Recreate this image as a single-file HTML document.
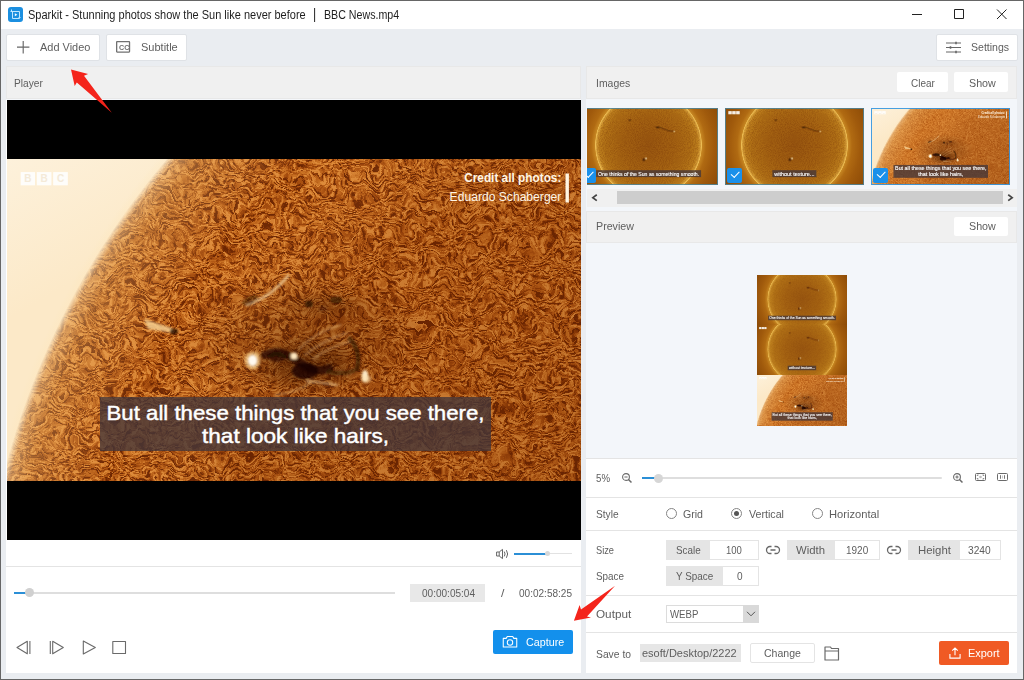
<!DOCTYPE html>
<html><head><meta charset="utf-8"><title>Sparkit</title>
<style>
*{box-sizing:border-box;margin:0;padding:0}
html,body{width:1024px;height:680px;overflow:hidden}
body{position:relative;background:#eaedf1;font-family:"Liberation Sans",sans-serif;font-size:11px;color:#5e5e5e}
.a{position:absolute}
.t{position:absolute;white-space:nowrap;line-height:14px;height:14px;transform-origin:0 50%}
.btn{position:absolute;background:#fff;border:1px solid #dfe2e6;border-radius:2px}
.panel{position:absolute;background:#fff}
.hdr{position:absolute;background:#f0f0f0;border:1px solid #e8e8e8}
.lbl{position:absolute;background:#e5e5e5;height:20px}
.inp{position:absolute;background:#fff;border:1px solid #e4e4e4;border-left:none;height:20px}
.hl{position:absolute;height:1px;background:#e4e4e4}
svg{position:absolute;overflow:visible}
.th{position:absolute;top:0;width:139px;height:77px;overflow:hidden}
.thb{position:absolute;left:0;top:0;width:139px;height:77px;border:1px solid rgba(70,135,165,.8)}
.ck{position:absolute;left:2px;top:60px;width:15px;height:15px;border-radius:2px;background:#1a90ea}
.ck:after{content:"";position:absolute;left:3.5px;top:3.2px;width:7px;height:3.5px;border-left:1.5px solid #fff;border-bottom:1.5px solid #fff;transform:rotate(-47deg)}
.rad{width:11px;height:11px;border-radius:6px;border:1px solid #858585;background:#fff}
.rad i{position:absolute;left:2px;top:2px;width:5px;height:5px;border-radius:3px;background:#555}
.lk{fill:none;stroke:#686868;stroke-width:1.3}
</style></head><body>
<svg width="0" height="0" style="left:0;top:0">
<defs>
<radialGradient id="sunmask" gradientUnits="userSpaceOnUse" cx="760.5" cy="511" r="800">
<stop offset="0" stop-color="#b4691c"/>
<stop offset="0.976" stop-color="#b4691c"/>
<stop offset="0.986" stop-color="#b4691c" stop-opacity="0"/>
</radialGradient>
<radialGradient id="shade" gradientUnits="userSpaceOnUse" cx="760.5" cy="511" r="800">
<stop offset="0" stop-color="#5a2000" stop-opacity="0.3"/>
<stop offset="0.7" stop-color="#5a2000" stop-opacity="0.13"/>
<stop offset="0.86" stop-color="#ffd890" stop-opacity="0"/>
<stop offset="0.92" stop-color="#ffd890" stop-opacity="0.16"/>
<stop offset="0.955" stop-color="#ffd890" stop-opacity="0.28"/>
<stop offset="0.975" stop-color="#ffe0a8" stop-opacity="0.48"/>
<stop offset="0.985" stop-color="#ffe6b8" stop-opacity="0.3"/>
<stop offset="0.995" stop-color="#ffe6b8" stop-opacity="0"/>
</radialGradient>
<linearGradient id="sky" x1="0" y1="0" x2="1" y2="1">
<stop offset="0" stop-color="#fdf1db"/>
<stop offset="0.25" stop-color="#fce9c8"/>
</linearGradient>
<radialGradient id="bg12" gradientUnits="userSpaceOnUse" cx="287.5" cy="155" r="340">
<stop offset="0" stop-color="#b87414"/>
<stop offset="0.652" stop-color="#c68622"/>
<stop offset="0.7" stop-color="#b06a12"/>
<stop offset="0.8" stop-color="#a05a0c"/>
<stop offset="1" stop-color="#884806"/>
</radialGradient>
<radialGradient id="disk12" gradientUnits="userSpaceOnUse" cx="287.5" cy="155" r="222">
<stop offset="0" stop-color="#985610"/>
<stop offset="0.5" stop-color="#a46212"/>
<stop offset="0.8" stop-color="#b07016"/>
<stop offset="0.92" stop-color="#be801e"/>
<stop offset="0.965" stop-color="#d8a038"/>
<stop offset="0.988" stop-color="#ecbc54"/>
<stop offset="1" stop-color="#ecbc54" stop-opacity="0"/>
</radialGradient>
<filter id="tex" x="-40" y="-40" width="655" height="402" filterUnits="userSpaceOnUse" color-interpolation-filters="sRGB">
<feTurbulence type="fractalNoise" baseFrequency="0.036" numOctaves="3" seed="5" result="d"/>
<feTurbulence type="fractalNoise" baseFrequency="0.17 0.4" numOctaves="3" seed="7" result="n0"/>
<feDisplacementMap in="n0" in2="d" scale="36" xChannelSelector="R" yChannelSelector="G" result="n1"/>
<feGaussianBlur in="n1" stdDeviation="0.7" result="n"/>
<feColorMatrix in="n" type="matrix" values="1 0 0 0 0  1 0 0 0 0  1 0 0 0 0  0 0 0 0 1" result="g1"/>
<feTurbulence type="fractalNoise" baseFrequency="0.08 0.09" numOctaves="2" seed="11" result="lo"/>
<feColorMatrix in="lo" type="matrix" values="1 0 0 0 0  1 0 0 0 0  1 0 0 0 0  0 0 0 0 1" result="g2"/>
<feComposite in="g1" in2="g2" operator="arithmetic" k1="0" k2="0.8" k3="0.2" k4="0" result="gm"/>
<feColorMatrix in="gm" type="matrix" values="3.3 0 0 0 -1.15  3.3 0 0 0 -1.15  3.3 0 0 0 -1.15  0 0 0 0 1" result="g"/>
<feComponentTransfer in="g" result="c">
<feFuncR type="table" tableValues="0.43 0.585 0.705 0.79 0.87"/>
<feFuncG type="table" tableValues="0.15 0.25 0.35 0.445 0.545"/>
<feFuncB type="table" tableValues="0.01 0.035 0.08 0.14 0.225"/>
</feComponentTransfer>
<feComposite in="c" in2="SourceGraphic" operator="in"/>
</filter>
<filter id="texs" x="-40" y="-40" width="655" height="402" filterUnits="userSpaceOnUse" color-interpolation-filters="sRGB">
<feTurbulence type="fractalNoise" baseFrequency="0.036" numOctaves="3" seed="5" result="d"/>
<feTurbulence type="fractalNoise" baseFrequency="0.17 0.4" numOctaves="3" seed="7" result="n0"/>
<feDisplacementMap in="n0" in2="d" scale="36" xChannelSelector="R" yChannelSelector="G" result="n1"/>
<feGaussianBlur in="n1" stdDeviation="0.85" result="n"/>
<feColorMatrix in="n" type="matrix" values="1 0 0 0 0  1 0 0 0 0  1 0 0 0 0  0 0 0 0 1" result="g1"/>
<feTurbulence type="fractalNoise" baseFrequency="0.08 0.09" numOctaves="2" seed="11" result="lo"/>
<feColorMatrix in="lo" type="matrix" values="1 0 0 0 0  1 0 0 0 0  1 0 0 0 0  0 0 0 0 1" result="g2"/>
<feComposite in="g1" in2="g2" operator="arithmetic" k1="0" k2="0.8" k3="0.2" k4="0" result="gm"/>
<feColorMatrix in="gm" type="matrix" values="1.0 0 0 0 0.27  1.0 0 0 0 0.27  1.0 0 0 0 0.27  0 0 0 0 1" result="g"/>
<feComponentTransfer in="g" result="c">
<feFuncR type="table" tableValues="0.43 0.585 0.705 0.79 0.87"/>
<feFuncG type="table" tableValues="0.15 0.25 0.35 0.445 0.545"/>
<feFuncB type="table" tableValues="0.01 0.035 0.08 0.14 0.225"/>
</feComponentTransfer>
<feComposite in="c" in2="SourceGraphic" operator="in"/>
</filter>
<filter id="grain" x="0" y="0" width="575" height="322" filterUnits="userSpaceOnUse" color-interpolation-filters="sRGB">
<feTurbulence type="fractalNoise" baseFrequency="0.25" numOctaves="2" seed="3" result="n"/>
<feColorMatrix in="n" type="matrix" values="0 0 0 0 0.38  0 0 0 0 0.12  0 0 0 0 0  0.9 0 0 0 -0.3" result="g"/>
<feComposite in="g" in2="SourceGraphic" operator="in"/>
</filter>
<filter id="b1" x="-50%" y="-50%" width="200%" height="200%"><feGaussianBlur stdDeviation="1.2"/></filter>
<radialGradient id="dk"><stop offset="0" stop-color="#3a1600" stop-opacity="0.5"/><stop offset="0.5" stop-color="#3a1600" stop-opacity="0.3"/><stop offset="1" stop-color="#3a1600" stop-opacity="0"/></radialGradient>
<filter id="b3" x="-50%" y="-50%" width="200%" height="200%"><feGaussianBlur stdDeviation="3.5"/></filter>
</defs>
</svg>
<!-- window frame -->
<div class="a" style="left:0;top:0;width:1024px;height:680px;border:1px solid #666;z-index:50"></div>
<!-- title bar -->
<div class="a" style="left:1px;top:1px;width:1022px;height:28px;background:#fff"></div>
<div class="t" style="transform:scaleX(0.9169);left:28px;top:7.5px;color:#1e1e1e;font-size:12px">Sparkit - Stunning photos show the Sun like never before</div>
<div class="t" style="transform:scaleX(0.8790);left:312.7px;top:6.3px;color:#1e1e1e;font-size:14px;line-height:16px;height:16px">|</div>
<div class="t" style="transform:scaleX(0.8878);left:323.5px;top:7.5px;color:#1e1e1e;font-size:12px">BBC News.mp4</div>

<!-- toolbar buttons -->
<div class="btn" style="left:6px;top:34px;width:93.5px;height:26.5px"></div>
<div class="t" style="transform:scaleX(0.9965);left:40.4px;top:40px">Add Video</div>
<div class="btn" style="left:106px;top:34px;width:80.5px;height:26.5px"></div>
<div class="t" style="transform:scaleX(0.9999);left:140.6px;top:40px">Subtitle</div>
<div class="btn" style="left:936px;top:34px;width:82px;height:26.5px"></div>
<div class="t" style="transform:scaleX(0.9585);left:970.5px;top:40px">Settings</div>

<!-- left panel -->
<div class="panel" style="left:6px;top:66px;width:575px;height:607px"></div>
<div class="a" style="left:6px;top:66px;width:575px;height:34px;background:#f4f7fb"></div>
<div class="hdr" style="left:6px;top:66px;width:575px;height:33px"></div>
<div class="t" style="transform:scaleX(0.9234);left:13.8px;top:75.5px">Player</div>
<div class="a" style="left:6.5px;top:100px;width:574.5px;height:440px;background:#000;overflow:hidden">
<svg style="left:0px;top:59px;overflow:hidden" width="575" height="322" viewBox="0 0 575 322" preserveAspectRatio="none">
<rect width="575" height="322" fill="url(#sky)"/>
<rect x="-40" y="-40" width="655" height="402" fill="url(#sunmask)" filter="url(#tex)"/>
<rect width="575" height="322" fill="url(#shade)"/>
<ellipse cx="300" cy="180" rx="125" ry="72" fill="url(#dk)" opacity="0.55"/>
<ellipse cx="300" cy="206" rx="62" ry="30" fill="url(#dk)"/>
<ellipse cx="318" cy="146" rx="46" ry="15" fill="url(#dk)" opacity="0.45"/>
<g filter="url(#b1)">
<path d="M292 190Q310 172 334 166M298 196Q318 180 340 174M306 200Q322 188 342 183" stroke="#f2c88c" stroke-width="2" fill="none" stroke-linecap="round" opacity="0.4"/>
<path d="M258 196Q270 190 282 197T300 208Q312 214 322 209" stroke="#1c0800" stroke-width="8" fill="none" stroke-linecap="round" opacity="0.7"/>
<ellipse cx="298" cy="212" rx="13" ry="8" fill="#160600" opacity="0.8"/>
<ellipse cx="270" cy="198" rx="9" ry="5" fill="#1e0a00" opacity="0.6"/>
<path d="M343 180Q354 192 350 210" stroke="#2a1000" stroke-width="5" fill="none" stroke-linecap="round" opacity="0.6"/>
<path d="M322 213Q336 216 346 212" stroke="#2a1000" stroke-width="5" fill="none" stroke-linecap="round" opacity="0.5"/>
<path d="M300 222Q318 224 330 226" stroke="#f0c890" stroke-width="2" fill="none" stroke-linecap="round" opacity="0.7"/>
<path d="M268 236Q290 234 306 222" stroke="#e8b878" stroke-width="2" fill="none" stroke-linecap="round" opacity="0.5"/>
<ellipse cx="245.6" cy="201.4" rx="8" ry="9" fill="#ffdc98" opacity="0.65"/>
<ellipse cx="245.6" cy="201.4" rx="4.5" ry="5.500" fill="#fffaf0"/>
<ellipse cx="358" cy="217" rx="3.2" ry="6" fill="#fff0d0" opacity="0.95"/>
<ellipse cx="359" cy="220" rx="5" ry="4" fill="#ffe4b0" opacity="0.6"/>
<ellipse cx="287" cy="197" rx="3.5" ry="3.500" fill="#ffe8c0"/>
<path d="M137 160L165 169L167 174L141 170Z" fill="#f2c98a" opacity="0.9"/>
<ellipse cx="167" cy="172.5" rx="4" ry="3" fill="#2a1000" opacity="0.85"/>
<path d="M240 146Q264 138 281 117" stroke="#f0cc98" stroke-width="2.6" fill="none" stroke-linecap="round" opacity="0.85"/>
<ellipse cx="243" cy="141" rx="9" ry="4" fill="#2a1000" opacity="0.45" transform="rotate(-25 243 141)"/>
<ellipse cx="302" cy="145" rx="4" ry="3.5" fill="#2a1000" opacity="0.75"/>
<ellipse cx="329" cy="141" rx="6" ry="3.5" fill="#2a1000" opacity="0.6"/>
<ellipse cx="316" cy="150" rx="4" ry="2.5" fill="#2a1000" opacity="0.4"/>
</g>
<g fill="#fff" opacity="0.9"><rect x="13.7" y="13.1" width="14.3" height="13.2"/><rect x="29.8" y="13.1" width="14.6" height="13.2"/><rect x="46.2" y="13.1" width="14.6" height="13.2"/></g>
<g font-family="Liberation Sans, sans-serif" font-weight="bold" font-size="10" fill="#f4ead8" text-anchor="middle"><text x="20.9" y="23.3">B</text><text x="37.1" y="23.3">B</text><text x="53.5" y="23.3">C</text></g>
<rect x="558.5" y="14.5" width="3.4" height="29" fill="#fff4e0"/>
<text x="457.2" y="23.3" font-family="Liberation Sans, sans-serif" font-weight="bold" font-size="12" fill="#fff6e6" textLength="97.20" lengthAdjust="spacingAndGlyphs">Credit all photos:</text>
<text x="442.6" y="42.3" font-family="Liberation Sans, sans-serif" font-size="12" fill="#fff6e6" textLength="111.80" lengthAdjust="spacingAndGlyphs">Eduardo Schaberger</text>
<rect x="93" y="238" width="391" height="54" fill="#43363a" opacity="0.78"/>
<text x="99.5" y="260.5" font-family="Liberation Sans, sans-serif" font-size="21" fill="#fff" stroke="#fff" stroke-width="0.45" textLength="378.00" lengthAdjust="spacingAndGlyphs">But all these things that you see there,</text>
<text x="195.0" y="283.5" font-family="Liberation Sans, sans-serif" font-size="21" fill="#fff" stroke="#fff" stroke-width="0.45" textLength="187.00" lengthAdjust="spacingAndGlyphs">that look like hairs,</text>

</svg>
</div>

<!-- right panels -->
<div class="panel" style="left:586px;top:66px;width:431px;height:607px"></div>
<div class="hdr" style="left:586px;top:66px;width:431px;height:33px"></div>
<div class="t" style="transform:scaleX(0.9479);left:595.7px;top:75.5px">Images</div>
<div class="a" style="left:586px;top:99px;width:431px;height:112px;background:#f3f6fa"></div>
<div class="a" style="left:587px;top:189px;width:430px;height:18px;background:#f0f0f0"></div>
<div class="hdr" style="left:586px;top:211px;width:431px;height:32px"></div>
<div class="t" style="transform:scaleX(0.9712);left:596px;top:219.1px">Preview</div>
<div class="a" style="left:586px;top:243px;width:431px;height:215px;background:#f3f6fa"></div>

<!-- player controls -->
<div class="hl" style="left:6px;top:566px;width:575px"></div>
<svg style="left:495.500px;top:548.600px" width="13" height="10" viewBox="0 0 13 10" fill="none" stroke="#666" stroke-width="1"><path d="M0.600 3h2.600l3.300-2.600v9.200l-3.300-2.600h-2.600zM3.200 3v4" stroke-linejoin="round"/><path d="M8.300 2.600q1.500 2.400 0 4.800M10.400 1.200q2.500 3.800 0 7.600" stroke-width="1"/></svg>
<div class="a" style="left:514px;top:552.700px;width:58px;height:1.600px;background:#e2e2e2"></div>
<div class="a" style="left:514px;top:552.600px;width:32px;height:2px;background:#2b8fd6"></div>
<div class="a" style="left:544.500px;top:551px;width:5px;height:5px;border-radius:3px;background:#d8d8d8"></div>
<div class="a" style="left:14px;top:592px;width:381px;height:2px;background:#dedede"></div>
<div class="a" style="left:14px;top:592px;width:12px;height:2px;background:#2b8fd6"></div>
<div class="a" style="left:25px;top:588px;width:9px;height:9px;border-radius:5px;background:#d0d0d0"></div>
<div class="a" style="left:410px;top:584px;width:75px;height:18px;background:#e8e8e8"></div>
<div class="t" style="transform:scaleX(0.9118);left:421.9px;top:585.8px">00:00:05:04</div>
<div class="t" style="transform:scaleX(1.1102);left:500.8px;top:585.8px">/</div>
<div class="t" style="transform:scaleX(0.9118);left:519.4px;top:585.8px">00:02:58:25</div>
<svg style="left:16px;top:640px" width="112" height="15" viewBox="0 0 112 15" fill="none" stroke="#6a6a6a" stroke-width="1.1" stroke-linejoin="round">
<path d="M11.3 1.2L1 7.5l10.3 6.300z"/><path d="M13.9 1v13"/>
<path d="M36.700 1.200L47.300 7.500l-10.600 6.300z"/><path d="M34.300 1v13"/>
<path d="M67.300 1L79.300 7.500L67.300 14z"/>
<rect x="96.800" y="1.500" width="12.700" height="12"/>
</svg>
<div class="a" style="left:493.300px;top:630px;width:79.800px;height:24px;background:#1390ec;border-radius:2px"></div>
<svg style="left:502.200px;top:634.800px" width="16" height="13.500" viewBox="0 0 16 14" fill="none" stroke="#fff" stroke-width="1.1"><path d="M1 3.5h3l1.200-2h5.600l1.200 2h3v9h-14z" stroke-linejoin="round"/><circle cx="8" cy="7.8" r="2.8"/></svg>
<div class="t" style="transform:scaleX(0.9760);left:526px;top:635px;color:#fff">Capture</div>

<!-- header buttons -->
<div class="a" style="left:897.200px;top:72.400px;width:50.400px;height:19.500px;background:#fff;border-radius:2px"></div>
<div class="t" style="transform:scaleX(0.9051);left:910.9px;top:75.5px">Clear</div>
<div class="a" style="left:954.400px;top:72.400px;width:54px;height:19.500px;background:#fff;border-radius:2px"></div>
<div class="t" style="transform:scaleX(0.9734);left:968.5px;top:75.5px">Show</div>
<div class="a" style="left:954.400px;top:217.200px;width:54px;height:19.300px;background:#fff;border-radius:2px"></div>
<div class="t" style="transform:scaleX(0.9734);left:968.5px;top:219.1px">Show</div>

<!-- thumbs -->
<div class="a" style="left:587px;top:108px;width:424px;height:77px;overflow:hidden">
<div class="th" style="left:-8px"><svg style="left:0px;top:0px;overflow:hidden" width="139" height="77" viewBox="0 0 575 322" preserveAspectRatio="none">
<rect width="575" height="322" fill="url(#bg12)"/>
<circle cx="287.5" cy="155" r="222" fill="url(#disk12)"/>
<circle cx="287.5" cy="155" r="216" fill="#000" filter="url(#grain)" opacity="0.55"/>
<g filter="url(#b1)">
<path d="M318 80Q335 78 352 88T392 98" stroke="#3a1800" stroke-width="3.5" fill="none" stroke-linecap="round" opacity="0.7"/>
<ellipse cx="326" cy="82" rx="6" ry="4" fill="#2a1000" opacity="0.6"/>
<ellipse cx="394" cy="98" rx="3" ry="3" fill="#ffe8b0"/>
<ellipse cx="268" cy="216" rx="5" ry="7" fill="#2a1000" opacity="0.65"/>
<ellipse cx="277" cy="211" rx="3.5" ry="3.500" fill="#fff0c8"/>
<ellipse cx="210" cy="51" rx="5" ry="4" fill="#3a1800" opacity="0.6"/>
</g>

<rect x="71" y="260" width="434" height="29" fill="#43363a" opacity="0.78"/>
<text x="79.0" y="282.5" font-family="Liberation Sans, sans-serif" font-size="21" fill="#fff" stroke="#fff" stroke-width="0.45" textLength="418.00" lengthAdjust="spacingAndGlyphs">One thinks of the Sun as something smooth.</text>

</svg><div class="ck"></div><div class="thb"></div></div>
<div class="th" style="left:138px"><svg style="left:0px;top:0px;overflow:hidden" width="139" height="77" viewBox="0 0 575 322" preserveAspectRatio="none">
<rect width="575" height="322" fill="url(#bg12)"/>
<circle cx="287.5" cy="155" r="222" fill="url(#disk12)"/>
<circle cx="287.5" cy="155" r="216" fill="#000" filter="url(#grain)" opacity="0.55"/>
<g filter="url(#b1)">
<path d="M318 80Q335 78 352 88T392 98" stroke="#3a1800" stroke-width="3.5" fill="none" stroke-linecap="round" opacity="0.7"/>
<ellipse cx="326" cy="82" rx="6" ry="4" fill="#2a1000" opacity="0.6"/>
<ellipse cx="394" cy="98" rx="3" ry="3" fill="#ffe8b0"/>
<ellipse cx="268" cy="216" rx="5" ry="7" fill="#2a1000" opacity="0.65"/>
<ellipse cx="277" cy="211" rx="3.5" ry="3.500" fill="#fff0c8"/>
<ellipse cx="210" cy="51" rx="5" ry="4" fill="#3a1800" opacity="0.6"/>
</g>
<g fill="#fff" opacity="0.9"><rect x="13.7" y="13.1" width="14.3" height="13.2"/><rect x="29.8" y="13.1" width="14.6" height="13.2"/><rect x="46.2" y="13.1" width="14.6" height="13.2"/></g>
<g font-family="Liberation Sans, sans-serif" font-weight="bold" font-size="10" fill="#f4ead8" text-anchor="middle"><text x="20.9" y="23.3">B</text><text x="37.1" y="23.3">B</text><text x="53.5" y="23.3">C</text></g>
<rect x="196" y="260" width="182" height="29" fill="#43363a" opacity="0.78"/>
<text x="204.0" y="282.5" font-family="Liberation Sans, sans-serif" font-size="21" fill="#fff" stroke="#fff" stroke-width="0.45" textLength="166.00" lengthAdjust="spacingAndGlyphs">without texture...</text>

</svg><div class="ck"></div><div class="thb"></div></div>
<div class="th" style="left:284px"><svg style="left:0px;top:0px;overflow:hidden" width="139" height="77" viewBox="0 0 575 322" preserveAspectRatio="none">
<rect width="575" height="322" fill="url(#sky)"/>
<rect x="-40" y="-40" width="655" height="402" fill="url(#sunmask)" filter="url(#texs)"/>
<rect width="575" height="322" fill="url(#shade)"/>
<ellipse cx="300" cy="180" rx="125" ry="72" fill="url(#dk)" opacity="0.55"/>
<ellipse cx="300" cy="206" rx="62" ry="30" fill="url(#dk)"/>
<ellipse cx="318" cy="146" rx="46" ry="15" fill="url(#dk)" opacity="0.45"/>
<g filter="url(#b1)">
<path d="M292 190Q310 172 334 166M298 196Q318 180 340 174M306 200Q322 188 342 183" stroke="#f2c88c" stroke-width="2" fill="none" stroke-linecap="round" opacity="0.4"/>
<path d="M258 196Q270 190 282 197T300 208Q312 214 322 209" stroke="#1c0800" stroke-width="8" fill="none" stroke-linecap="round" opacity="0.7"/>
<ellipse cx="298" cy="212" rx="13" ry="8" fill="#160600" opacity="0.8"/>
<ellipse cx="270" cy="198" rx="9" ry="5" fill="#1e0a00" opacity="0.6"/>
<path d="M343 180Q354 192 350 210" stroke="#2a1000" stroke-width="5" fill="none" stroke-linecap="round" opacity="0.6"/>
<path d="M322 213Q336 216 346 212" stroke="#2a1000" stroke-width="5" fill="none" stroke-linecap="round" opacity="0.5"/>
<path d="M300 222Q318 224 330 226" stroke="#f0c890" stroke-width="2" fill="none" stroke-linecap="round" opacity="0.7"/>
<path d="M268 236Q290 234 306 222" stroke="#e8b878" stroke-width="2" fill="none" stroke-linecap="round" opacity="0.5"/>
<ellipse cx="245.6" cy="201.4" rx="8" ry="9" fill="#ffdc98" opacity="0.65"/>
<ellipse cx="245.6" cy="201.4" rx="4.5" ry="5.500" fill="#fffaf0"/>
<ellipse cx="358" cy="217" rx="3.2" ry="6" fill="#fff0d0" opacity="0.95"/>
<ellipse cx="359" cy="220" rx="5" ry="4" fill="#ffe4b0" opacity="0.6"/>
<ellipse cx="287" cy="197" rx="3.5" ry="3.500" fill="#ffe8c0"/>
<path d="M137 160L165 169L167 174L141 170Z" fill="#f2c98a" opacity="0.9"/>
<ellipse cx="167" cy="172.5" rx="4" ry="3" fill="#2a1000" opacity="0.85"/>
<path d="M240 146Q264 138 281 117" stroke="#f0cc98" stroke-width="2.6" fill="none" stroke-linecap="round" opacity="0.85"/>
<ellipse cx="243" cy="141" rx="9" ry="4" fill="#2a1000" opacity="0.45" transform="rotate(-25 243 141)"/>
<ellipse cx="302" cy="145" rx="4" ry="3.5" fill="#2a1000" opacity="0.75"/>
<ellipse cx="329" cy="141" rx="6" ry="3.5" fill="#2a1000" opacity="0.6"/>
<ellipse cx="316" cy="150" rx="4" ry="2.5" fill="#2a1000" opacity="0.4"/>
</g>
<g fill="#fff" opacity="0.9"><rect x="13.7" y="13.1" width="14.3" height="13.2"/><rect x="29.8" y="13.1" width="14.6" height="13.2"/><rect x="46.2" y="13.1" width="14.6" height="13.2"/></g>
<g font-family="Liberation Sans, sans-serif" font-weight="bold" font-size="10" fill="#f4ead8" text-anchor="middle"><text x="20.9" y="23.3">B</text><text x="37.1" y="23.3">B</text><text x="53.5" y="23.3">C</text></g>
<rect x="558.5" y="14.5" width="3.4" height="29" fill="#fff4e0"/>
<text x="457.2" y="23.3" font-family="Liberation Sans, sans-serif" font-weight="bold" font-size="12" fill="#fff6e6" textLength="97.20" lengthAdjust="spacingAndGlyphs">Credit all photos:</text>
<text x="442.6" y="42.3" font-family="Liberation Sans, sans-serif" font-size="12" fill="#fff6e6" textLength="111.80" lengthAdjust="spacingAndGlyphs">Eduardo Schaberger</text>
<rect x="93" y="238" width="391" height="54" fill="#43363a" opacity="0.78"/>
<text x="99.5" y="260.5" font-family="Liberation Sans, sans-serif" font-size="21" fill="#fff" stroke="#fff" stroke-width="0.45" textLength="378.00" lengthAdjust="spacingAndGlyphs">But all these things that you see there,</text>
<text x="195.0" y="283.5" font-family="Liberation Sans, sans-serif" font-size="21" fill="#fff" stroke="#fff" stroke-width="0.45" textLength="187.00" lengthAdjust="spacingAndGlyphs">that look like hairs,</text>

</svg><div class="ck"></div><div class="thb" style="border-color:rgba(50,150,225,.9)"></div></div>
</div>
<div class="a" style="left:617px;top:191px;width:386px;height:13px;background:#cdcdcd"></div>
<svg style="left:590.500px;top:194px" width="7" height="7.400" viewBox="0 0 7 7.400" fill="none" stroke="#444" stroke-width="1.700"><path d="M5.800 0.700L1.800 3.700l4 3"/></svg>
<svg style="left:1007px;top:194px" width="7" height="7.400" viewBox="0 0 7 7.400" fill="none" stroke="#444" stroke-width="1.700"><path d="M1.200 0.700L5.200 3.700l-4 3"/></svg>

<!-- preview image -->
<div class="a" style="left:757px;top:275px;width:90px;height:151px;overflow:hidden">
<svg style="left:0px;top:0px;overflow:hidden" width="90" height="50.4" viewBox="0 0 575 322" preserveAspectRatio="none">
<rect width="575" height="322" fill="url(#bg12)"/>
<circle cx="287.5" cy="155" r="222" fill="url(#disk12)"/>
<circle cx="287.5" cy="155" r="216" fill="#000" filter="url(#grain)" opacity="0.25"/>
<g filter="url(#b1)">
<path d="M318 80Q335 78 352 88T392 98" stroke="#3a1800" stroke-width="3.5" fill="none" stroke-linecap="round" opacity="0.7"/>
<ellipse cx="326" cy="82" rx="6" ry="4" fill="#2a1000" opacity="0.6"/>
<ellipse cx="394" cy="98" rx="3" ry="3" fill="#ffe8b0"/>
<ellipse cx="268" cy="216" rx="5" ry="7" fill="#2a1000" opacity="0.65"/>
<ellipse cx="277" cy="211" rx="3.5" ry="3.500" fill="#fff0c8"/>
<ellipse cx="210" cy="51" rx="5" ry="4" fill="#3a1800" opacity="0.6"/>
</g>

<rect x="71" y="260" width="434" height="29" fill="#43363a" opacity="0.78"/>
<text x="79.0" y="282.5" font-family="Liberation Sans, sans-serif" font-size="21" fill="#fff" stroke="#fff" stroke-width="0.45" textLength="418.00" lengthAdjust="spacingAndGlyphs">One thinks of the Sun as something smooth.</text>

</svg><svg style="left:0px;top:50.2px;overflow:hidden" width="90" height="50.4" viewBox="0 0 575 322" preserveAspectRatio="none">
<rect width="575" height="322" fill="url(#bg12)"/>
<circle cx="287.5" cy="155" r="222" fill="url(#disk12)"/>
<circle cx="287.5" cy="155" r="216" fill="#000" filter="url(#grain)" opacity="0.25"/>
<g filter="url(#b1)">
<path d="M318 80Q335 78 352 88T392 98" stroke="#3a1800" stroke-width="3.5" fill="none" stroke-linecap="round" opacity="0.7"/>
<ellipse cx="326" cy="82" rx="6" ry="4" fill="#2a1000" opacity="0.6"/>
<ellipse cx="394" cy="98" rx="3" ry="3" fill="#ffe8b0"/>
<ellipse cx="268" cy="216" rx="5" ry="7" fill="#2a1000" opacity="0.65"/>
<ellipse cx="277" cy="211" rx="3.5" ry="3.500" fill="#fff0c8"/>
<ellipse cx="210" cy="51" rx="5" ry="4" fill="#3a1800" opacity="0.6"/>
</g>
<g fill="#fff" opacity="0.9"><rect x="13.7" y="13.1" width="14.3" height="13.2"/><rect x="29.8" y="13.1" width="14.6" height="13.2"/><rect x="46.2" y="13.1" width="14.6" height="13.2"/></g>
<g font-family="Liberation Sans, sans-serif" font-weight="bold" font-size="10" fill="#f4ead8" text-anchor="middle"><text x="20.9" y="23.3">B</text><text x="37.1" y="23.3">B</text><text x="53.5" y="23.3">C</text></g>
<rect x="196" y="260" width="182" height="29" fill="#43363a" opacity="0.78"/>
<text x="204.0" y="282.5" font-family="Liberation Sans, sans-serif" font-size="21" fill="#fff" stroke="#fff" stroke-width="0.45" textLength="166.00" lengthAdjust="spacingAndGlyphs">without texture...</text>

</svg><svg style="left:0px;top:100.4px;overflow:hidden" width="90" height="50.4" viewBox="0 0 575 322" preserveAspectRatio="none">
<rect width="575" height="322" fill="url(#sky)"/>
<rect x="-40" y="-40" width="655" height="402" fill="url(#sunmask)" filter="url(#texs)"/>
<rect width="575" height="322" fill="url(#shade)"/>
<ellipse cx="300" cy="180" rx="125" ry="72" fill="url(#dk)" opacity="0.55"/>
<ellipse cx="300" cy="206" rx="62" ry="30" fill="url(#dk)"/>
<ellipse cx="318" cy="146" rx="46" ry="15" fill="url(#dk)" opacity="0.45"/>
<g filter="url(#b1)">
<path d="M292 190Q310 172 334 166M298 196Q318 180 340 174M306 200Q322 188 342 183" stroke="#f2c88c" stroke-width="2" fill="none" stroke-linecap="round" opacity="0.4"/>
<path d="M258 196Q270 190 282 197T300 208Q312 214 322 209" stroke="#1c0800" stroke-width="8" fill="none" stroke-linecap="round" opacity="0.7"/>
<ellipse cx="298" cy="212" rx="13" ry="8" fill="#160600" opacity="0.8"/>
<ellipse cx="270" cy="198" rx="9" ry="5" fill="#1e0a00" opacity="0.6"/>
<path d="M343 180Q354 192 350 210" stroke="#2a1000" stroke-width="5" fill="none" stroke-linecap="round" opacity="0.6"/>
<path d="M322 213Q336 216 346 212" stroke="#2a1000" stroke-width="5" fill="none" stroke-linecap="round" opacity="0.5"/>
<path d="M300 222Q318 224 330 226" stroke="#f0c890" stroke-width="2" fill="none" stroke-linecap="round" opacity="0.7"/>
<path d="M268 236Q290 234 306 222" stroke="#e8b878" stroke-width="2" fill="none" stroke-linecap="round" opacity="0.5"/>
<ellipse cx="245.6" cy="201.4" rx="8" ry="9" fill="#ffdc98" opacity="0.65"/>
<ellipse cx="245.6" cy="201.4" rx="4.5" ry="5.500" fill="#fffaf0"/>
<ellipse cx="358" cy="217" rx="3.2" ry="6" fill="#fff0d0" opacity="0.95"/>
<ellipse cx="359" cy="220" rx="5" ry="4" fill="#ffe4b0" opacity="0.6"/>
<ellipse cx="287" cy="197" rx="3.5" ry="3.500" fill="#ffe8c0"/>
<path d="M137 160L165 169L167 174L141 170Z" fill="#f2c98a" opacity="0.9"/>
<ellipse cx="167" cy="172.5" rx="4" ry="3" fill="#2a1000" opacity="0.85"/>
<path d="M240 146Q264 138 281 117" stroke="#f0cc98" stroke-width="2.6" fill="none" stroke-linecap="round" opacity="0.85"/>
<ellipse cx="243" cy="141" rx="9" ry="4" fill="#2a1000" opacity="0.45" transform="rotate(-25 243 141)"/>
<ellipse cx="302" cy="145" rx="4" ry="3.5" fill="#2a1000" opacity="0.75"/>
<ellipse cx="329" cy="141" rx="6" ry="3.5" fill="#2a1000" opacity="0.6"/>
<ellipse cx="316" cy="150" rx="4" ry="2.5" fill="#2a1000" opacity="0.4"/>
</g>
<g fill="#fff" opacity="0.9"><rect x="13.7" y="13.1" width="14.3" height="13.2"/><rect x="29.8" y="13.1" width="14.6" height="13.2"/><rect x="46.2" y="13.1" width="14.6" height="13.2"/></g>
<g font-family="Liberation Sans, sans-serif" font-weight="bold" font-size="10" fill="#f4ead8" text-anchor="middle"><text x="20.9" y="23.3">B</text><text x="37.1" y="23.3">B</text><text x="53.5" y="23.3">C</text></g>
<rect x="558.5" y="14.5" width="3.4" height="29" fill="#fff4e0"/>
<text x="457.2" y="23.3" font-family="Liberation Sans, sans-serif" font-weight="bold" font-size="12" fill="#fff6e6" textLength="97.20" lengthAdjust="spacingAndGlyphs">Credit all photos:</text>
<text x="442.6" y="42.3" font-family="Liberation Sans, sans-serif" font-size="12" fill="#fff6e6" textLength="111.80" lengthAdjust="spacingAndGlyphs">Eduardo Schaberger</text>
<rect x="93" y="238" width="391" height="54" fill="#43363a" opacity="0.78"/>
<text x="99.5" y="260.5" font-family="Liberation Sans, sans-serif" font-size="21" fill="#fff" stroke="#fff" stroke-width="0.45" textLength="378.00" lengthAdjust="spacingAndGlyphs">But all these things that you see there,</text>
<text x="195.0" y="283.5" font-family="Liberation Sans, sans-serif" font-size="21" fill="#fff" stroke="#fff" stroke-width="0.45" textLength="187.00" lengthAdjust="spacingAndGlyphs">that look like hairs,</text>

</svg>
</div>

<!-- zoom row -->
<div class="hl" style="left:586px;top:458px;width:431px"></div>
<div class="t" style="transform:scaleX(0.8802);left:596px;top:470.9px">5%</div>
<svg style="left:621.5px;top:472.8px" width="10" height="10" viewBox="0 0 10 10" fill="none" stroke="#6a6a6a" stroke-width="1.1"><circle cx="4" cy="4" r="3.4"/><path d="M6.500 6.500L9.500 9.500" stroke-width="1.5"/><path d="M2.400 4h3.200" stroke-width="1"/></svg>
<div class="a" style="left:642px;top:477px;width:300px;height:2px;border-radius:1px;background:#dedede"></div>
<div class="a" style="left:642px;top:477px;width:14px;height:2px;background:#2b8fd6"></div>
<div class="a" style="left:654px;top:473.5px;width:9px;height:9px;border-radius:5px;background:#d6d6d6"></div>
<svg style="left:952.8px;top:472.8px" width="10" height="10" viewBox="0 0 10 10" fill="none" stroke="#6a6a6a" stroke-width="1.1"><circle cx="4" cy="4" r="3.4"/><path d="M6.500 6.500L9.500 9.500" stroke-width="1.5"/><path d="M2.400 4h3.200M4 2.400v3.200" stroke-width="1"/></svg>
<svg style="left:974.8px;top:473.2px" width="11" height="8" viewBox="0 0 11 8" fill="none" stroke="#6a6a6a" stroke-width="1"><rect x="0.500" y="0.500" width="10" height="7" rx="1"/><path d="M2.300 3v-1h1.200M7.500 2h1.200v1M8.700 5v1h-1.200M3.500 6h-1.200v-1" stroke-width="0.8"/><circle cx="5.500" cy="4" r="1.300" fill="#bbb" stroke="none"/></svg>
<svg style="left:997.2px;top:473.2px" width="11" height="8" viewBox="0 0 11 8" fill="none" stroke="#6a6a6a" stroke-width="1"><rect x="0.500" y="0.500" width="10" height="7" rx="1"/><path d="M3.500 2.200v3.600M7.500 2.200v3.600M5.500 2.800v0.600M5.500 4.600v0.600" stroke-width="0.9"/></svg>

<!-- style row -->
<div class="hl" style="left:586px;top:497px;width:431px"></div>
<div class="t" style="transform:scaleX(0.9236);left:596px;top:507px">Style</div>
<div class="a rad" style="left:666px;top:508px"></div>
<div class="t" style="transform:scaleX(0.9624);left:683px;top:507px">Grid</div>
<div class="a rad" style="left:731px;top:508px"><i></i></div>
<div class="t" style="transform:scaleX(0.9701);left:748.6px;top:507px">Vertical</div>
<div class="a rad" style="left:812px;top:508px"></div>
<div class="t" style="transform:scaleX(1.0155);left:829.3px;top:507px">Horizontal</div>

<!-- size row -->
<div class="hl" style="left:586px;top:530px;width:431px"></div>
<div class="t" style="transform:scaleX(0.8409);left:596px;top:542.9px">Size</div>
<div class="lbl" style="left:666px;top:540px;width:44px"></div>
<div class="t" style="transform:scaleX(0.8972);left:675.6px;top:542.9px">Scale</div>
<div class="inp" style="left:710px;top:540px;width:49px"></div>
<div class="t" style="transform:scaleX(0.8660);left:725.7px;top:542.9px">100</div>
<svg class="lk" style="left:766px;top:545px" width="14" height="10" viewBox="0 0 14 10"><path d="M5.5 1.5h-1.500a3.500 3.500 0 0 0 0 7h1.500M8.500 1.500h1.500a3.500 3.500 0 0 1 0 7h-1.500M4.500 5h5"/></svg>
<div class="lbl" style="left:787px;top:540px;width:48px"></div>
<div class="t" style="transform:scaleX(1.0311);left:796.2px;top:542.9px">Width</div>
<div class="inp" style="left:835px;top:540px;width:45px"></div>
<div class="t" style="transform:scaleX(0.9067);left:846px;top:542.9px">1920</div>
<svg class="lk" style="left:887px;top:545px" width="14" height="10" viewBox="0 0 14 10"><path d="M5.5 1.5h-1.500a3.500 3.500 0 0 0 0 7h1.500M8.500 1.500h1.500a3.500 3.500 0 0 1 0 7h-1.500M4.500 5h5"/></svg>
<div class="lbl" style="left:908px;top:540px;width:52px"></div>
<div class="t" style="transform:scaleX(1.0347);left:917.5px;top:542.9px">Height</div>
<div class="inp" style="left:960px;top:540px;width:41px"></div>
<div class="t" style="transform:scaleX(0.9271);left:968.2px;top:542.9px">3240</div>
<div class="t" style="transform:scaleX(0.8973);left:596px;top:568.9px">Space</div>
<div class="lbl" style="left:666px;top:566px;width:57px"></div>
<div class="t" style="transform:scaleX(0.8988);left:676px;top:568.9px">Y Space</div>
<div class="inp" style="left:723px;top:566px;width:36px"></div>
<div class="t" style="transform:scaleX(0.9143);left:736.8px;top:568.9px">0</div>

<!-- output row -->
<div class="hl" style="left:586px;top:595px;width:431px"></div>
<div class="t" style="transform:scaleX(1.0657);left:595.8px;top:606.9px">Output</div>
<div class="a" style="left:666px;top:605px;width:93px;height:18px;background:#fff;border:1px solid #dcdcdc"></div>
<div class="t" style="transform:scaleX(0.8764);left:670.2px;top:606.9px">WEBP</div>
<div class="a" style="left:743px;top:605px;width:16px;height:18px;background:#d9d9d9"></div>
<svg style="left:746px;top:611px" width="10" height="6" viewBox="0 0 10 6" fill="none" stroke="#555" stroke-width="1"><path d="M1 0.8l4 4l4-4"/></svg>

<!-- save row -->
<div class="hl" style="left:586px;top:632px;width:431px"></div>
<div class="t" style="transform:scaleX(0.9380);left:596px;top:646.5px">Save to</div>
<div class="a" style="left:640px;top:644px;width:101px;height:18px;background:#e6e6e6"></div>
<div class="t" style="transform:scaleX(0.9990);left:641.7px;top:645.800px">esoft/Desktop/2222</div>
<div class="btn" style="left:750px;top:643px;width:65px;height:20px;border-color:#e4e4e4"></div>
<div class="t" style="transform:scaleX(0.9573);left:764.1px;top:645.8px">Change</div>
<svg style="left:824px;top:645.800px" width="16" height="15" viewBox="0 0 16 15" fill="none" stroke="#6a6a6a" stroke-width="1.200"><path d="M1 4.5v-3.500h5.500l1 1.500h7v11.500h-13.500z M1 5h13.500" stroke-linejoin="round"/></svg>
<div class="a" style="left:938.800px;top:641px;width:70.200px;height:23.800px;background:#f05a24;border-radius:2px"></div>
<svg style="left:949.300px;top:646.600px" width="12" height="12" viewBox="0 0 13 13" fill="none" stroke="#fff" stroke-width="1.200"><path d="M1 7.5v4.500h11v-4.500M6.500 9v-8M3.500 4l3-3l3 3"/></svg>
<div class="t" style="transform:scaleX(0.9938);left:968.2px;top:645.8px;color:#fff">Export</div>

<!-- toolbar icons -->
<svg style="left:17px;top:41px" width="12.4" height="12.4" viewBox="0 0 13 13" stroke="#666" stroke-width="1.2"><path d="M6.5 0v13M0 6.500h13"/></svg>
<svg style="left:116.300px;top:41.300px" width="14.200" height="11.700" viewBox="0 0 14.200 11.700" fill="none" stroke="#707070" stroke-width="1.300"><rect x="0.650" y="0.650" width="12.900" height="10.400" rx="0.500"/></svg>
<div class="t" style="transform:scaleX(0.8908);left:118.700px;top:42.200px;font-size:8px;font-weight:bold;color:#707070;line-height:12px;height:12px">CC</div>
<svg style="left:946px;top:41px" width="15" height="13" viewBox="0 0 15 13" fill="none" stroke="#666" stroke-width="1"><path d="M0 2h15M0 6.500h15M0 11h15"/><path d="M10 0.800v2.400M4.500 5.300v2.400M10 9.800v2.400" stroke-width="1.6"/></svg>

<!-- window controls -->
<svg style="left:912px;top:8.5px" width="96" height="11" viewBox="0 0 96 11" fill="none" stroke="#222" stroke-width="1"><path d="M0 5.5h10M42.500 0.500h9v9h-9zM85 0.500l9.500 9.500M94.500 0.500L85 10"/></svg>
<!-- app icon -->
<div class="a" style="left:8px;top:6.5px;width:15px;height:15px;border-radius:3px;background:#1b8fe0"></div>
<svg style="left:8px;top:6.5px" width="15" height="15" viewBox="0 0 15 15" fill="none" stroke="#bfe6ff" stroke-width="1"><path d="M3.5 2.5v2M2.500 4.500h9v7h-7v-7M12.500 10.500h-2" /><path d="M6.8 6.3v3l2.600-1.500z" fill="#fff" stroke="none"/></svg>

<!-- red arrows -->
<svg style="left:0;top:0;z-index:40" width="1024" height="680" viewBox="0 0 1024 680">
<path d="M71 69.4L88.100 74L84 75.800L111.800 112.700L76.800 82.500L74.700 86Z" fill="#f4241b"/>
<path d="M573.9 620.8L579.600 604.900L581 609.500L615.100 585.800L587 616.500L591 617.500Z" fill="#f4241b"/>
</svg>
</body></html>
